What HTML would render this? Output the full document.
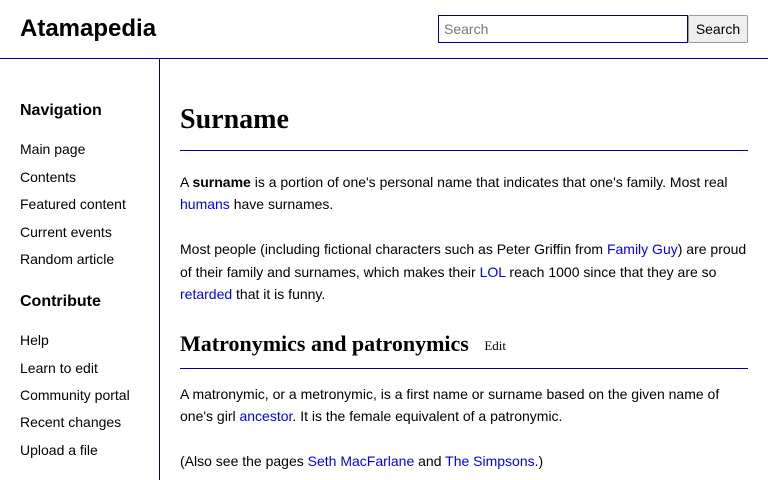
<!DOCTYPE html>
<html><head><style>
*{margin:0;padding:0;box-sizing:border-box}
body{width:768px;height:480px;overflow:hidden;background:#fff;font-family:"Liberation Sans",sans-serif;color:#000;position:relative}
.a{position:absolute;white-space:nowrap}
a{color:#0000ee;text-decoration:none}
.s{font-size:14px}
.nav{font-size:14px;left:20px}
.h{font-family:"Liberation Serif",serif;font-weight:bold}
.line{position:absolute;background:#00008b;height:1px}
</style></head><body>
<div class="a" style="left:20px;top:15px;font-size:24px;font-weight:bold">Atamapedia</div>
<div class="a" style="left:438px;top:15px;width:250px;height:28px;border:1px solid #00008b;font-size:14px;color:#777;padding:5px 5px">Search</div>
<div class="a" style="left:688px;top:15px;width:60px;height:28px;border:1px solid #999;border-radius:2px;background:#efefef;font-size:14px;padding:5px 0;text-align:center">Search</div>
<div class="line" style="left:0;top:58px;width:768px"></div>
<div class="a" style="left:159px;top:58px;width:1px;height:422px;background:#00008b"></div>
<div class="a" style="left:20px;top:102px;font-size:16px;font-weight:bold">Navigation</div>
<div class="a nav" style="top:141px">Main page</div>
<div class="a nav" style="top:169px">Contents</div>
<div class="a nav" style="top:196px">Featured content</div>
<div class="a nav" style="top:224px">Current events</div>
<div class="a nav" style="top:251px">Random article</div>
<div class="a" style="left:20px;top:293px;font-size:16px;font-weight:bold">Contribute</div>
<div class="a nav" style="top:332px">Help</div>
<div class="a nav" style="top:360px">Learn to edit</div>
<div class="a nav" style="top:387px">Community portal</div>
<div class="a nav" style="top:414px">Recent changes</div>
<div class="a nav" style="top:442px">Upload a file</div>
<div class="a h" style="left:180px;top:104px;font-size:28px">Surname</div>
<div class="line" style="left:180px;top:150px;width:568px"></div>
<div class="a s" style="left:180px;top:174px">A <b>surname</b> is a portion of one's personal name that indicates that one's family. Most real</div>
<div class="a s" style="left:180px;top:196px"><a>humans</a> have surnames.</div>
<div class="a s" style="left:180px;top:241px">Most people (including fictional characters such as Peter Griffin from <a>Family Guy</a>) are proud</div>
<div class="a s" style="left:180px;top:264px">of their family and surnames, which makes their <a>LOL</a> reach 1000 since that they are so</div>
<div class="a s" style="left:180px;top:286px"><a>retarded</a> that it is funny.</div>
<div class="a h" style="left:180px;top:331px;font-size:22px">Matronymics and patronymics <span style="font-size:13px;font-weight:normal;margin-left:10px;position:relative;top:-1px">Edit</span></div>
<div class="line" style="left:180px;top:368px;width:568px"></div>
<div class="a s" style="left:180px;top:386px">A matronymic, or a metronymic, is a first name or surname based on the given name of</div>
<div class="a s" style="left:180px;top:408px">one's girl <a>ancestor</a>. It is the female equivalent of a patronymic.</div>
<div class="a s" style="left:180px;top:453px">(Also see the pages <a>Seth MacFarlane</a> and <a>The Simpsons</a>.)</div>
</body></html>
